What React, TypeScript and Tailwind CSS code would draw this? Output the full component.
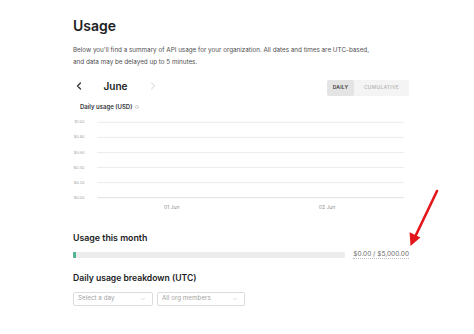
import { ChevronLeft, ChevronRight, ChevronDown } from 'lucide-react';

const gridRows = ['$1.00', '$0.80', '$0.60', '$0.40', '$0.20', '$0.00'];

function UsageChart() {
  // plot area inside a 336 x 95 box
  const top = 7.3;
  const step = 15.08;
  return (
    <svg width={336} height={95} className="mt-[4.5px] block" style={{ fontFamily: 'Inter, sans-serif' }}>
      {gridRows.map((label, i) => {
        const y = top + i * step;
        return (
          <g key={label}>
            <line x1={24} x2={331} y1={y} y2={y} stroke={i === gridRows.length - 1 ? '#e0e0e0' : '#ececec'} strokeWidth={1} />
            <text x={11.5} y={y} textAnchor="end" dominantBaseline="middle" fontSize={3.9} fill="#a8a8a8">
              {label}
            </text>
          </g>
        );
      })}
      <text x={98.7} y={92.7} textAnchor="middle" dominantBaseline="middle" fontSize={5} fill="#8e8e8e">
        01 Jun
      </text>
      <text x={254} y={92.7} textAnchor="middle" dominantBaseline="middle" fontSize={5} fill="#8e8e8e">
        02 Jun
      </text>
    </svg>
  );
}

function Select({ label, width }: { label: string; width: string }) {
  return (
    <div className={`flex h-[14px] items-center justify-between rounded-[2px] border border-[#dcdcdc] pl-[4px] pr-[6px] ${width}`}>
      <span className="text-[6.3px] leading-none text-[#a3a3a3]">{label}</span>
      <ChevronDown size={6} strokeWidth={2} className="text-[#bdbdbd]" />
    </div>
  );
}

export default function App() {
  return (
    <div className="relative h-[334px] w-[474px] overflow-hidden bg-white font-['Inter',sans-serif] text-[#202123]">
      <div className="ml-[73px] flex w-[336px] flex-col pt-[17px]">
        <h1 className="text-[14px] font-semibold leading-[18px]">Usage</h1>

        <p className="mt-[9px] text-[6.3px] leading-[12px] text-[#505050]">
          Below you'll find a summary of API usage for your organization. All dates and times are UTC-based,
          <br />
          and data may be delayed up to 5 minutes.
        </p>

        {/* month switcher + view toggle */}
        <div className="mt-[10px] flex h-[18px] items-start justify-between">
          <div className="flex h-[16px] items-center">
            <ChevronLeft size={12} strokeWidth={2.5} className="-ml-[0.5px] text-[#333]" />
            <span className="ml-[19px] text-[10px] font-semibold leading-none">June</span>
            <ChevronRight size={12} strokeWidth={2} className="ml-[20px] text-[#cfcfcf]" />
          </div>
          <div className="mt-[2px] flex h-[16px] items-stretch rounded-[2px] bg-[#f4f4f4] text-[5px] font-semibold tracking-[0.04em]">
            <span className="flex w-[27px] items-center justify-center rounded-[2px] bg-[#e4e4e4] text-[#3d3d3d]">DAILY</span>
            <span className="flex w-[55px] items-center justify-center text-[#bdbdbd]">CUMULATIVE</span>
          </div>
        </div>

        <div className="ml-[7px] mt-[6.5px] flex h-[8px] items-center gap-[3px]">
          <span className="text-[6px] font-semibold leading-none text-[#353740]">Daily usage (USD)</span>
          <span className="h-[4px] w-[4px] rounded-full border border-[#d0d0d0]" />
        </div>

        <UsageChart />

        <h2 className="mt-[21.5px] text-[8.8px] font-semibold leading-[12px]">Usage this month</h2>

        <div className="mt-[7.5px] flex h-[8px] items-center gap-[8px]">
          <div className="flex h-[5.5px] flex-1 overflow-hidden rounded-[1px] bg-[#ececec]">
            <div className="w-[2.5px] bg-[#4fb394]" />
          </div>
          <span className="border-b border-dotted border-[#bbbbbb] text-[6.5px] leading-[7px] text-[#6b6b6b]">
            $0.00 / $5,000.00
          </span>
        </div>

        <h2 className="mt-[13px] text-[8.6px] font-semibold leading-[12px]">Daily usage breakdown (UTC)</h2>

        <div className="mt-[7.5px] flex gap-[4px]">
          <Select label="Select a day" width="w-[80px]" />
          <Select label="All org members" width="w-[88px]" />
        </div>
      </div>

      {/* annotation arrow */}
      <svg className="absolute left-[400px] top-[185px]" width={45} height={70} viewBox="400 185 45 70">
        <line x1={437} y1={191} x2={415.5} y2={236} stroke="#e3161b" strokeWidth={2.6} strokeLinecap="round" />
        <polygon points="410.5,246 409.6,232.3 420.4,237.5" fill="#e3161b" />
      </svg>
    </div>
  );
}
